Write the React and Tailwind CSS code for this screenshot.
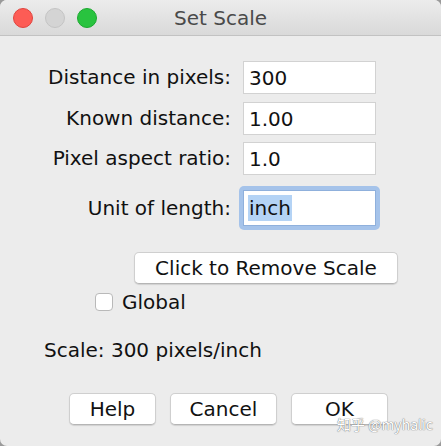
import React from 'react';

function Field({ value, focused }) {
    if (focused) {
        return (
            <div className="rounded-[5px] bg-[#a5c3ea] p-[4px] -m-[4px] w-[141px]">
                <div className="h-[36px] bg-white border border-[#8fb0dc] flex items-center pl-[4px]">
                    <span className="bg-[#b4d3f5] leading-[26px] px-[1px] text-[#111]">{value}</span>
                </div>
            </div>
        );
    }
    return (
        <div className="h-[33px] w-[133px] bg-white border border-[#d2d2d2] flex items-center pl-[5px] text-[#111]">
            {value}
        </div>
    );
}

function Button({ children, className }) {
    return (
        <button
            type="button"
            className={
                'h-[32px] bg-white border border-[#cfcfcf] border-b-[#b5b5b5] rounded-[5px] shadow-[0_1px_1px_rgba(0,0,0,0.12)] text-[#111] ' +
                className
            }
        >
            {children}
        </button>
    );
}

export default function App() {
    return (
        <div className="w-[441px] h-[446px] bg-[#9a9a9a] font-['DejaVu_Sans',sans-serif] text-[20px] overflow-hidden">
            <div className="relative w-full h-full bg-[#ececec] rounded-[7px] overflow-hidden flex flex-col">
                {/* Title bar */}
                <div className="relative h-[36px] bg-gradient-to-b from-[#ececec] to-[#d9d9d9] border-b border-[#c2c2c2] flex items-center">
                    <div className="flex items-center gap-[12px] pl-[13px]">
                        <span className="w-[20px] h-[20px] rounded-full bg-[#fd5c55] border border-[#e0443e]" />
                        <span className="w-[20px] h-[20px] rounded-full bg-[#d4d4d4] border border-[#c4c4c4]" />
                        <span className="w-[20px] h-[20px] rounded-full bg-[#29c33f] border border-[#1ca930]" />
                    </div>
                    <div className="absolute inset-0 flex items-center justify-center text-[#4a4a4a] text-[20px]">
                        Set Scale
                    </div>
                </div>

                {/* Form rows */}
                <div className="pt-[25px] grid grid-cols-[231px_133px] gap-x-[12px] items-center">
                    <div className="text-right text-[#111] h-[33px] leading-[33px]">Distance in pixels:</div>
                    <Field value="300" />
                    <div className="text-right text-[#111] h-[33px] leading-[33px] mt-[8px]">Known distance:</div>
                    <div className="mt-[8px]">
                        <Field value="1.00" />
                    </div>
                    <div className="text-right text-[#111] h-[33px] leading-[33px] mt-[7px]">Pixel aspect ratio:</div>
                    <div className="mt-[7px]">
                        <Field value="1.0" />
                    </div>
                    <div className="text-right text-[#111] h-[36px] leading-[36px] mt-[15px]">Unit of length:</div>
                    <div className="mt-[15px]">
                        <Field value="inch" focused />
                    </div>
                </div>

                <div className="pl-[134px] pt-[26px]">
                    <Button className="w-[264px] h-[31px]">Click to Remove Scale</Button>
                </div>

                <label className="flex items-center pl-[95px] pt-[3px] gap-[9px] text-[#111]">
                    <span className="w-[18px] h-[18px] bg-white border border-[#b9b9b9] rounded-[4px]" />
                    Global
                </label>

                <div className="pl-[44px] pt-[18px] text-[#111]">Scale: 300 pixels/inch</div>

                <div className="flex pl-[69px] pt-[28px] gap-[14px]">
                    <Button className="w-[87px]">Help</Button>
                    <Button className="w-[107px]">Cancel</Button>
                    <Button className="w-[97px]">OK</Button>
                </div>

                {/* watermark */}
                <div className="absolute left-[337px] top-[414px] text-[14px] text-white font-['Noto_Sans_CJK_SC',sans-serif] [text-shadow:0_0_1px_#777,0_0_1px_#777]">
                    知乎 @myhalic
                </div>
            </div>
        </div>
    );
}
